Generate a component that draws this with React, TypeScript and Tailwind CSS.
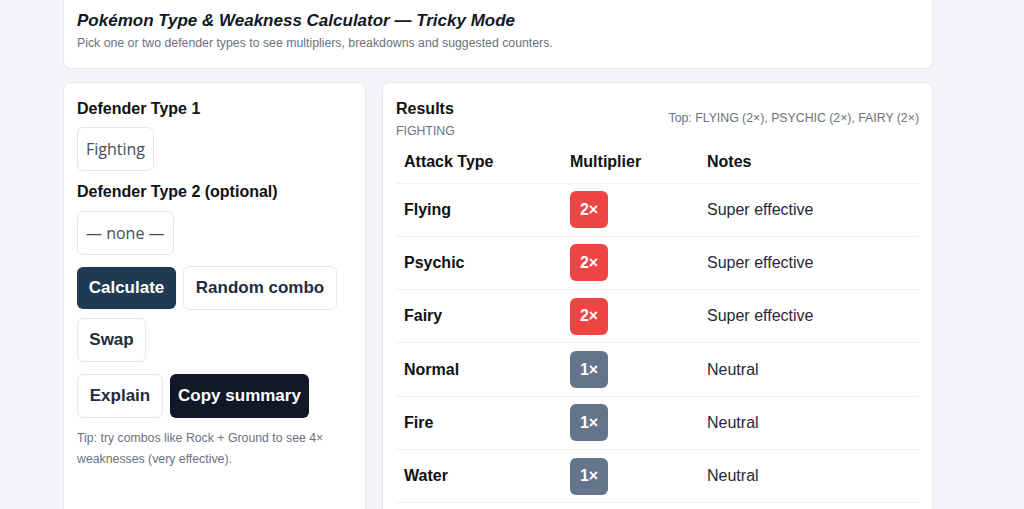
import React from "react";

type Row = { type: string; mult: number; note: string };

const rows: Row[] = [
	{ type: "Flying", mult: 2, note: "Super effective" },
	{ type: "Psychic", mult: 2, note: "Super effective" },
	{ type: "Fairy", mult: 2, note: "Super effective" },
	{ type: "Normal", mult: 1, note: "Neutral" },
	{ type: "Fire", mult: 1, note: "Neutral" },
	{ type: "Water", mult: 1, note: "Neutral" },
];

function OutlineButton({ children, className }: { children: React.ReactNode; className: string }) {
	return (
		<button
			className={
				"h-[44px] rounded-md border border-[#e3e8f4] bg-white text-center text-[17px] font-bold text-[#1e2d3f] " +
				className
			}
		>
			{children}
		</button>
	);
}

function SelectBox({ children }: { children: React.ReactNode }) {
	return (
		<div className="flex h-[44px] w-fit items-center rounded-md border border-[#e3e8f0] bg-white px-2 text-[16px] text-[#434d5b] [font-family:'Open_Sans',sans-serif]">
			{children}
		</div>
	);
}

function Badge({ mult }: { mult: number }) {
	return (
		<span
			className={
				"flex h-[37px] w-[38px] items-center justify-center rounded-md text-[16px] font-bold text-white " +
				(mult > 1 ? "bg-[#ef4444]" : "bg-[#64748b]")
			}
		>
			{mult}×
		</span>
	);
}

export default function App() {
	return (
		<div className="h-[509px] overflow-hidden bg-[#f3f5f9] [font-family:'Liberation_Sans',Arial,sans-serif]">
			<div className="ml-[63px] w-[870px]">
				{/* header */}
				<div className="-mt-[6px] rounded-lg border border-[#e6eaf0] bg-white px-[13px] pb-4 pt-[14px]">
					<h1 className="text-[17px] font-bold italic leading-6 text-[#111827]">
						Pokémon Type &amp; Weakness Calculator — Tricky Mode
					</h1>
					<p className="mt-[1px] text-[12.3px] leading-[18px] text-[#6b7280]">
						Pick one or two defender types to see multipliers, breakdowns and suggested counters.
					</p>
				</div>

				<div className="mt-[13px] grid grid-cols-[303px_1fr] gap-4">
					{/* controls */}
					<div className="h-[480px] rounded-lg border border-[#e6eaf0] bg-white px-[13px] pt-[16px]">
						<h2 className="text-[16px] font-bold leading-5 text-[#111]">Defender Type 1</h2>
						<div className="mt-[8px]">
							<SelectBox>Fighting</SelectBox>
						</div>
						<h2 className="mt-[11px] text-[16px] font-bold leading-5 text-[#111]">
							Defender Type 2 (optional)
						</h2>
						<div className="mt-[9px]">
							<SelectBox>— none —</SelectBox>
						</div>
						<div className="mt-[11px] flex flex-wrap items-center gap-x-[7px] gap-y-2">
							<button className="h-[42px] w-[99px] rounded-md bg-[#1f3a52] text-center text-[17px] font-bold text-white">
								Calculate
							</button>
							<OutlineButton className="w-[154px]">Random combo</OutlineButton>
							<OutlineButton className="w-[69px]">Swap</OutlineButton>
						</div>
						<div className="mt-[12px] flex flex-wrap items-center gap-[7px]">
							<OutlineButton className="w-[86px]">Explain</OutlineButton>
							<button className="h-[44px] w-[139px] rounded-md bg-[#111827] text-center text-[17px] font-bold text-white">
								Copy summary
							</button>
						</div>
						<p className="mt-[10px] text-[12.3px] leading-[21px] text-[#6b7280]">
							Tip: try combos like Rock + Ground to see 4× weaknesses (very effective).
						</p>
					</div>

					{/* results */}
					<div className="h-[480px] rounded-lg border border-[#e6eaf0] bg-white px-[13px] pt-[16px]">
						<div className="flex items-start justify-between">
							<div>
								<h2 className="text-[16px] font-bold leading-5 text-[#111]">Results</h2>
								<p className="mt-[3px] text-[12.3px] leading-[18px] text-[#6b7280]">FIGHTING</p>
							</div>
							<p className="mt-[10px] text-[12.3px] leading-[18px] text-[#6b7280]">
								Top: FLYING (2×), PSYCHIC (2×), FAIRY (2×)
							</p>
						</div>
						<table className="mt-[2px] w-full border-collapse text-left">
							<thead>
								<tr className="border-b border-[#eef1f5]">
									<th className="h-[41px] w-[166px] px-2 text-[16px] font-bold text-[#111]">Attack Type</th>
									<th className="w-[137px] px-2 text-[16px] font-bold text-[#111]">Multiplier</th>
									<th className="px-2 text-[16px] font-bold text-[#111]">Notes</th>
								</tr>
							</thead>
							<tbody>
								{rows.map((r) => (
									<tr key={r.type} className="border-b border-[#eef1f5]">
										<td className="h-[53.33px] px-2 py-0 text-[16px] font-bold text-[#111]">{r.type}</td>
										<td className="px-2 py-0">
											<Badge mult={r.mult} />
										</td>
										<td className="px-2 py-0 text-[16px] text-[#1f2937]">{r.note}</td>
									</tr>
								))}
							</tbody>
						</table>
					</div>
				</div>
			</div>
		</div>
	);
}
